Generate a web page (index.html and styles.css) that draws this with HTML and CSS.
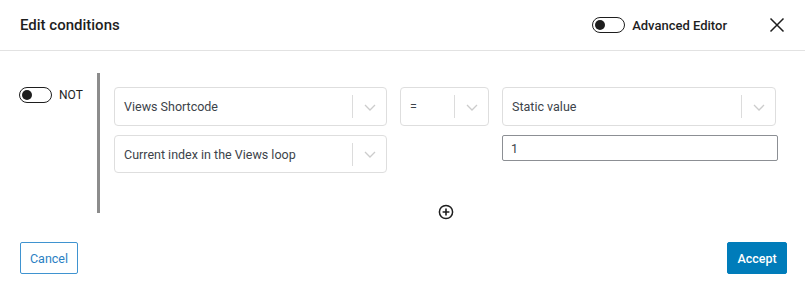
FILE: index.html
```html
<!DOCTYPE html>
<html>
<head>
<meta charset="utf-8">
<link rel="stylesheet" href="styles.css">
</head>
<body>
<div class="modal">
  <div class="header">
    <h1 class="title">Edit conditions</h1>
    <div class="header-right">
      <span class="toggle"><span class="knob"></span></span>
      <span class="toggle-label">Advanced Editor</span>
      <svg class="close" width="24" height="24" viewBox="0 0 24 24"><path d="M5.5 5.5 L18.5 18.5 M18.5 5.5 L5.5 18.5" stroke="#1e1e1e" stroke-width="1.5" fill="none"/></svg>
    </div>
  </div>
  <div class="content">
    <div class="not-col">
      <span class="toggle"><span class="knob"></span></span>
      <span class="not-label">NOT</span>
    </div>
    <div class="bar"></div>
    <div class="conditions">
      <div class="grid">
        <div class="select"><span class="value">Views Shortcode</span><span class="sep"></span><span class="chev"><svg width="20" height="20" viewBox="0 0 20 20"><path d="M5 8 L10 13 L15 8" stroke="#cccccc" stroke-width="1.3" fill="none"/></svg></span></div>
        <div class="select"><span class="value">=</span><span class="sep"></span><span class="chev"><svg width="20" height="20" viewBox="0 0 20 20"><path d="M5 8 L10 13 L15 8" stroke="#cccccc" stroke-width="1.3" fill="none"/></svg></span></div>
        <div class="select"><span class="value">Static value</span><span class="sep"></span><span class="chev"><svg width="20" height="20" viewBox="0 0 20 20"><path d="M5 8 L10 13 L15 8" stroke="#cccccc" stroke-width="1.3" fill="none"/></svg></span></div>
        <div class="select"><span class="value">Current index in the Views loop</span><span class="sep"></span><span class="chev"><svg width="20" height="20" viewBox="0 0 20 20"><path d="M5 8 L10 13 L15 8" stroke="#cccccc" stroke-width="1.3" fill="none"/></svg></span></div>
        <div class="empty"></div>
        <div class="input">1</div>
      </div>
      <div class="add">
        <svg width="16" height="16" viewBox="0 0 16 16"><circle cx="8" cy="8" r="6.6" stroke="#1e1e1e" stroke-width="1.5" fill="none"/><path d="M8 4.6 V11.4 M4.6 8 H11.4" stroke="#1e1e1e" stroke-width="1.6"/></svg>
      </div>
    </div>
  </div>
  <div class="footer">
    <button class="btn cancel">Cancel</button>
    <button class="btn accept">Accept</button>
  </div>
</div>
</body>
</html>
```
FILE: styles.css
```css
* { box-sizing: border-box; }
body {
  margin: 0;
  background: #fff;
  font-family: Roboto, "Noto Sans", "Liberation Sans", sans-serif;
  color: #1e1e1e;
}
.modal { width: 805px; height: 293px; }
.header {
  height: 51px;
  border-bottom: 1px solid #e2e2e2;
  display: flex;
  align-items: center;
  padding: 0 0 0 20px;
}
.title {
  margin: 0;
  font-size: 15px;
  font-weight: 500;
  flex: 1;
}
.header-right {
  display: flex;
  align-items: center;
  padding-right: 16px;
}
.toggle {
  width: 33px;
  height: 16px;
  border: 1px solid #1e1e1e;
  border-radius: 8px;
  display: inline-flex;
  align-items: center;
  padding-left: 2px;
  flex: none;
}
.knob {
  width: 10px;
  height: 10px;
  border-radius: 50%;
  background: #1e1e1e;
}
.toggle-label {
  font-size: 13px;
  margin-left: 7px;
  margin-right: 38px;
  font-weight: 500;
}
.close { display: block; }
.content {
  display: flex;
  padding-top: 22px;
}
.not-col {
  width: 97px;
  padding-left: 19px;
  padding-top: 14px;
  display: flex;
  align-items: flex-start;
}
.not-label {
  font-size: 12px;
  margin-left: 7px;
  line-height: 14px;
  margin-top: 1px;
  color: #1e1e1e;
}
.bar {
  width: 3px;
  height: 140px;
  background: #8c8c8c;
  flex: none;
}
.conditions {
  padding-left: 14px;
  padding-top: 14px;
  width: 676px;
}
.grid {
  display: grid;
  grid-template-columns: 273px 89px 274px;
  column-gap: 13px;
  row-gap: 9px;
  align-items: start;
}
.select {
  height: 39px;
  border: 1px solid #dedede;
  border-radius: 4px;
  display: flex;
  align-items: center;
  padding-left: 9px;
  font-size: 12.5px;
  color: #3c434a;
}
.select:nth-child(4) { height: 38px; }
.value { flex: 1; white-space: nowrap; }
.sep {
  width: 1px;
  height: 23px;
  background: #dcdcdc;
}
.chev {
  width: 33px;
  display: flex;
  justify-content: center;
  align-items: center;
}
.chev svg { display: block; }
.input {
  height: 26px;
  border: 1px solid #8c8f94;
  border-radius: 2px;
  font-size: 12.5px;
  color: #3c434a;
  padding-left: 8px;
  display: flex;
  align-items: center;
  margin-right: -2px;
}
.add {
  display: flex;
  justify-content: center;
  margin-top: 31px;
  padding-left: 2px;
}
.add svg { display: block; }
.footer {
  display: flex;
  justify-content: space-between;
  padding: 22px 18px 0 20px;
}
.btn {
  height: 32px;
  font-family: inherit;
  font-size: 12.5px;
  border-radius: 2px;
  padding: 0;
}
.cancel {
  width: 58px;
  background: #fff;
  border: 1px solid #3f93d0;
  color: #2a7fc3;
}
.accept {
  width: 60px;
  background: #007cba;
  border: 1px solid #007cba;
  color: #fff;
  font-weight: 500;
}
```
